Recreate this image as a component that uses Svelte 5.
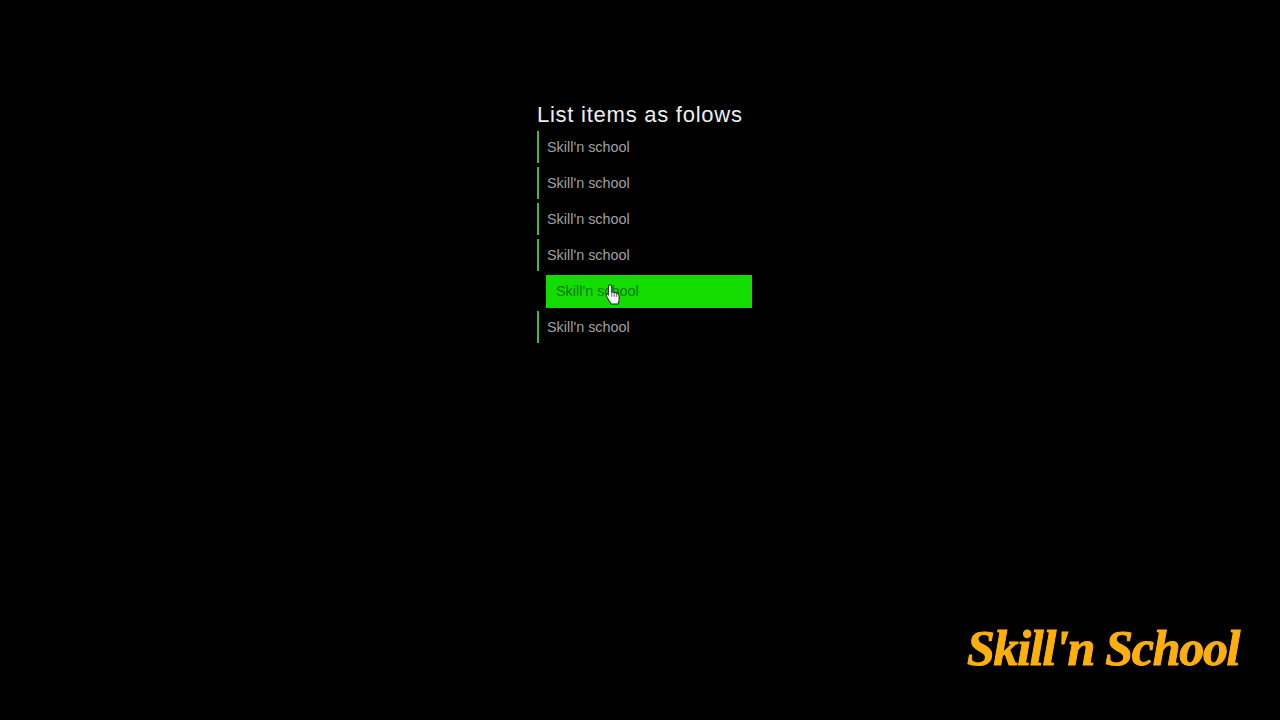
<script>
const items = ["Skill'n school", "Skill'n school", "Skill'n school", "Skill'n school", "Skill'n school", "Skill'n school"];
const hovered = 4;
</script>

<style>
:global(body) {
	background: #000;
}
.page {
	position: relative;
	height: 720px;
	background: #000;
	overflow: hidden;
	font-family: "Liberation Sans", Arial, sans-serif;
}
.box {
	width: 215px;
	margin-left: 537px;
	padding-top: 103px;
}
h2 {
	margin: 0 0 4px;
	font-size: 22px;
	line-height: 24px;
	font-weight: normal;
	letter-spacing: 0.75px;
	color: #eee;
	white-space: nowrap;
}
ul {
	list-style: none;
	margin: 0;
	padding: 0;
}
li {
	position: relative;
	height: 32px;
	line-height: 32px;
	margin-bottom: 4px;
	padding-left: 8px;
	border-left: 2px solid #45b83f;
	font-size: 14.4px;
	color: #a0a0a0;
}
li.hover {
	margin-left: 9px;
	padding-left: 10px;
	border-left: 0;
	background: #12dc00;
	color: #0a7a0a;
	height: 33px;
}
li.hover + li {
	margin-top: -1px;
}
.cursor {
	position: absolute;
	left: 59px;
	top: 8px;
	width: 18px;
	height: 23px;
}
.logo {
	position: absolute;
	left: 967px;
	top: 618px;
	font-family: "Liberation Serif", serif;
	font-style: italic;
	font-weight: bold;
	font-size: 50px;
	line-height: 60px;
	letter-spacing: -1.3px;
	-webkit-text-stroke: 1px #fdb00c;
	color: #fdb00c;
	white-space: nowrap;
}
</style>

<div class="page">
	<div class="box">
		<h2>List items as folows</h2>
		<ul>
			{#each items as item, i}
			<li class={i == hovered ? "hover" : ""}>
				{item}
				{#if i == hovered}
				<svg class="cursor" viewBox="0 0 16 20">
					<path d="M4.500 1.500c.9 0 1.500.6 1.500 1.500v5l.6-.3c.7-.2 1.300 0 1.600.5.7-.3 1.400-.1 1.700.5.8-.3 1.600 0 1.900.7l.7 1.600v4.500l-1 3H5.500L2 13 1 10.500c-.2-.8.6-1.300 1.300-.9L3 10.300V3c0-.9.6-1.500 1.500-1.500z" fill="#fff" stroke="#222" stroke-width=".9"/>
					<path d="M6 8v4M8.200 8.200V12M10.400 8.800V12" stroke="#333" stroke-width=".7" fill="none"/>
				</svg>
				{/if}
			</li>
			{/each}
		</ul>
	</div>
	<div class="logo">Skill'n School</div>
</div>
